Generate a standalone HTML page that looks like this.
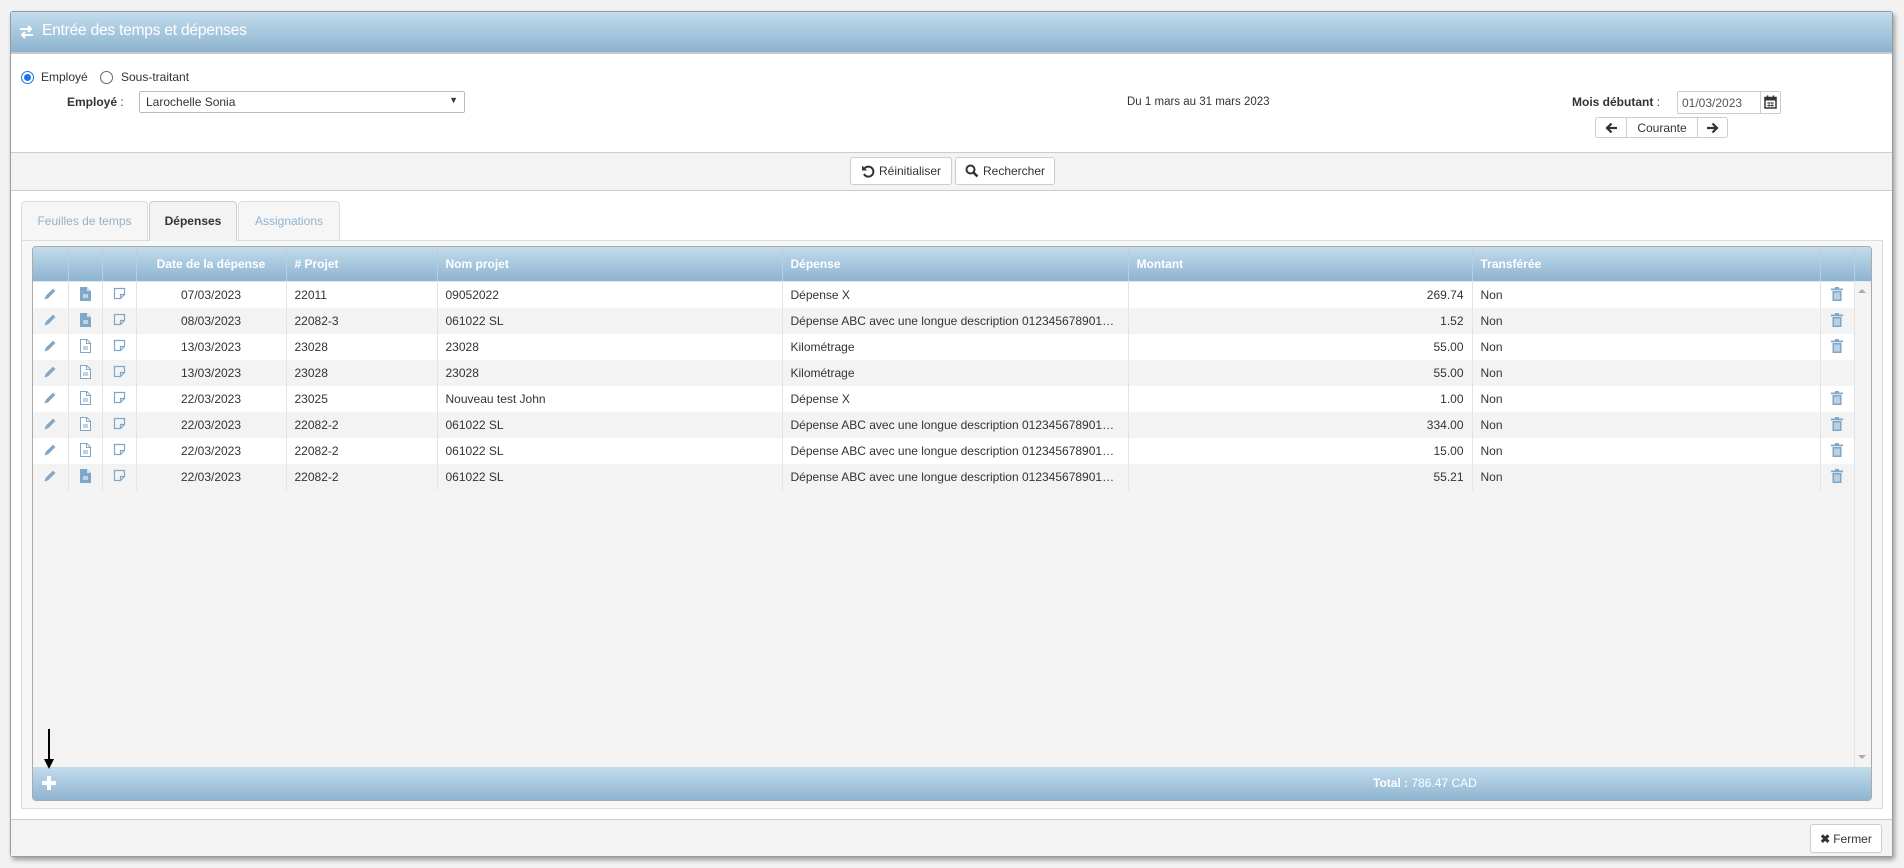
<!DOCTYPE html>
<html><head><meta charset="utf-8">
<style>
*{box-sizing:border-box;margin:0;padding:0}
body{width:1904px;height:868px;background:#f2f2f2;font-family:"Liberation Sans",sans-serif;color:#333;position:relative;overflow:hidden;font-size:12px}
.abs{position:absolute}
.win{left:10px;top:11px;width:1883px;height:846px;border:1px solid #9a9a9a;border-radius:3px;background:#fff;box-shadow:2px 3px 5px rgba(0,0,0,.35);overflow:hidden}
.grad{background:linear-gradient(#c2dcec,#8db3d0)}
.btn{border:1px solid #ccc;border-radius:3px;background:#fff;display:flex;align-items:center;justify-content:center;font-size:12px;color:#333}
table{border-collapse:collapse;table-layout:fixed}
td,th{height:26px;white-space:nowrap;overflow:hidden;text-overflow:ellipsis;padding:0 8px;font-size:12px}
th{height:34px;color:#fff;font-weight:bold;text-align:left;border-left:1px solid #b7cfe0}
td{border-left:1px solid #e2e2e2}
tr.r1 td{background:#fff}
tr.r2 td{background:#f3f3f3}
td.ic{text-align:center;padding:0}
td.c{text-align:center}
td.rt{text-align:right}
</style></head><body>
<div class="abs win"></div>
<div class="abs grad" style="left:11px;top:12px;width:1881px;height:40px;border-radius:2px 2px 0 0"></div>
<div class="abs" style="left:11px;top:52px;width:1881px;height:2px;background:#c8c8c8"></div>
<svg class="abs" style="left:19px;top:25px" width="15" height="14" viewBox="0 0 15 14"><path d="M1 4h11M9 1l3 3-3 3M14 10H3M6 7l-3 3 3 3" stroke="#fff" stroke-width="2" fill="none"/></svg>
<div class="abs" style="left:42px;top:22px;color:#fff;font-size:15.5px;letter-spacing:-0.2px">Entrée des temps et dépenses</div>

<div class="abs" style="left:21px;top:71px;width:13px;height:13px;border-radius:50%;border:1px solid #1a73e8;background:#fff"><div style="margin:2px;width:7px;height:7px;border-radius:50%;background:#1a73e8"></div></div>
<div class="abs" style="left:41px;top:70px;font-size:12px">Employé</div>
<div class="abs" style="left:100px;top:71px;width:13px;height:13px;border-radius:50%;border:1px solid #666;background:#fff"></div>
<div class="abs" style="left:121px;top:70px;font-size:12px">Sous-traitant</div>
<div class="abs" style="left:67px;top:95px;font-weight:bold;font-size:12px">Employé <span style="font-weight:normal">:</span></div>
<div class="abs" style="left:139px;top:91px;width:326px;height:22px;border:1px solid #bbb;border-radius:2px;padding:3px 6px;font-size:12px">Larochelle Sonia<span style="position:absolute;right:6px;top:3px;font-size:9px">▼</span></div>
<div class="abs" style="left:1127px;top:96px;font-size:11.5px">Du 1 mars au 31 mars 2023</div>
<div class="abs" style="left:1572px;top:95px;font-weight:bold;font-size:12px">Mois débutant <span style="font-weight:normal">:</span></div>
<div class="abs" style="left:1677px;top:91px;width:104px;height:23px;border:1px solid #ccc;border-radius:2px;padding:4px 4px;font-size:12px;color:#555">01/03/2023</div>
<div class="abs" style="left:1760px;top:92px;width:1px;height:21px;background:#ccc"></div>
<svg class="abs" style="left:1764px;top:95px" width="13" height="14" viewBox="0 0 13 14"><rect x="1" y="2.5" width="11" height="10.5" fill="none" stroke="#333" stroke-width="1.5"/><rect x="1" y="2.5" width="11" height="3" fill="#333"/><path d="M3.5 0.5v3M9.5 0.5v3" stroke="#333" stroke-width="1.5"/><path d="M3 8h7M3 10.5h7M5 7v5M8 7v5" stroke="#333" stroke-width=".8"/></svg>
<div class="abs btn" style="left:1595px;top:117px;width:32px;height:21px;border-radius:3px 0 0 3px"><svg width="13" height="12" viewBox="0 0 13 12"><path d="M12 6H2M6.5 1.5L2 6l4.5 4.5" stroke="#333" stroke-width="2.2" fill="none"/></svg></div>
<div class="abs btn" style="left:1626px;top:117px;width:72px;height:21px;border-radius:0">Courante</div>
<div class="abs btn" style="left:1697px;top:117px;width:31px;height:21px;border-radius:0 3px 3px 0"><svg width="13" height="12" viewBox="0 0 13 12"><path d="M1 6h10M6.5 1.5L11 6l-4.5 4.5" stroke="#333" stroke-width="2.2" fill="none"/></svg></div>

<div class="abs" style="left:11px;top:152px;width:1881px;height:39px;background:#f3f3f3;border-top:1px solid #ccc;border-bottom:1px solid #ccc"></div>
<div class="abs btn" style="left:850px;top:157px;width:102px;height:28px"><svg width="14" height="14" viewBox="0 0 14 14" style="margin-right:4px"><path d="M3.5 4.5A5 5 0 1 1 3 10" stroke="#333" stroke-width="2" fill="none"/><path d="M1 1.5v5h5z" fill="#333"/></svg>Réinitialiser</div>
<div class="abs btn" style="left:955px;top:157px;width:100px;height:28px"><svg width="14" height="14" viewBox="0 0 14 14" style="margin-right:4px"><circle cx="5.5" cy="5.5" r="4" stroke="#333" stroke-width="2" fill="none"/><path d="M8.5 8.5l4 4" stroke="#333" stroke-width="2.5"/></svg>Rechercher</div>

<div class="abs" style="left:21px;top:201px;width:127px;height:40px;border:1px solid #ddd;border-bottom:none;border-radius:4px 4px 0 0;background:#f6f6f6;color:#8fb3d0;padding-top:12px;text-align:center;font-size:12px">Feuilles de temps</div>
<div class="abs" style="left:149px;top:201px;width:88px;height:40px;border:1px solid #ccc;border-bottom:none;border-radius:4px 4px 0 0;background:#f3f3f3;color:#333;padding-top:12px;text-align:center;font-size:12px;font-weight:bold;z-index:2">Dépenses</div>
<div class="abs" style="left:238px;top:201px;width:102px;height:40px;border:1px solid #ddd;border-bottom:none;border-radius:4px 4px 0 0;background:#f6f6f6;color:#8fb3d0;padding-top:12px;text-align:center;font-size:12px">Assignations</div>
<div class="abs" style="left:21px;top:240px;width:1862px;height:569px;border:1px solid #ddd;background:#f7f7f7"></div>

<div class="abs" style="left:32px;top:246px;width:1840px;height:555px;border:1px solid #aaa;border-radius:4px;background:#f3f3f3;overflow:hidden">
<table style="width:1821px">
<colgroup><col style="width:35px"><col style="width:34px"><col style="width:34px"><col style="width:150px"><col style="width:151px"><col style="width:345px"><col style="width:346px"><col style="width:344px"><col style="width:348px"><col style="width:34px"></colgroup>
<tr style="background:linear-gradient(#c2dcec,#8db3d0)"><th style="border-left:none"></th><th></th><th></th><th style="text-align:center">Date de la dépense</th><th># Projet</th><th>Nom projet</th><th>Dépense</th><th>Montant</th><th>Transférée</th><th></th></tr>
</table>
<div class="abs grad" style="left:1821px;top:0;width:19px;height:34px;border-left:1px solid #b7cfe0"></div>
<div class="abs" style="left:0;top:34px;width:1840px;height:1px;background:#dde8f0"></div>
<table id="body" style="width:1821px;position:absolute;left:0;top:35px">
<colgroup><col style="width:35px"><col style="width:34px"><col style="width:34px"><col style="width:150px"><col style="width:151px"><col style="width:345px"><col style="width:346px"><col style="width:344px"><col style="width:348px"><col style="width:34px"></colgroup>
</table>
<div class="abs" style="left:1821px;top:35px;width:19px;height:485px;background:#f3f3f3;border-left:1px solid #e4e4e4"></div>
<div class="abs" style="left:1825px;top:42px;width:0;height:0;border-left:4px solid transparent;border-right:4px solid transparent;border-bottom:4px solid #aaa"></div>
<div class="abs" style="left:1825px;top:508px;width:0;height:0;border-left:4px solid transparent;border-right:4px solid transparent;border-top:4px solid #aaa"></div>
<div class="abs grad" style="left:0;top:520px;width:1840px;height:34px"></div>
<div class="abs" style="left:9px;top:529px;width:14px;height:14px"><div style="position:absolute;left:5px;top:0;width:4px;height:14px;background:#fff"></div><div style="position:absolute;left:0;top:5px;width:14px;height:4px;background:#fff"></div></div>
<div class="abs" style="left:1340px;top:529px;color:#fff;font-size:12px"><b>Total :</b> 786.47 CAD</div>
</div>
<div class="abs" style="left:48px;top:729px;width:2px;height:32px;background:#000"></div>
<div class="abs" style="left:44px;top:759px;width:0;height:0;border-left:5px solid transparent;border-right:5px solid transparent;border-top:10px solid #000"></div>

<div class="abs" style="left:11px;top:819px;width:1881px;height:37px;background:#f3f3f3;border-top:1px solid #ccc"></div>
<div class="abs btn" style="left:1810px;top:824px;width:72px;height:29px"><span style="font-weight:bold;margin-right:3px">✖</span>Fermer</div>

<script>
var rows=[["07/03/2023","22011","09052022","Dépense X","269.74",1,1],
["08/03/2023","22082-3","061022 SL","Dépense ABC avec une longue description 0123456789012345678","1.52",1,1],
["13/03/2023","23028","23028","Kilométrage","55.00",0,1],
["13/03/2023","23028","23028","Kilométrage","55.00",0,0],
["22/03/2023","23025","Nouveau test John","Dépense X","1.00",0,1],
["22/03/2023","22082-2","061022 SL","Dépense ABC avec une longue description 0123456789012345678","334.00",0,1],
["22/03/2023","22082-2","061022 SL","Dépense ABC avec une longue description 0123456789012345678","15.00",0,1],
["22/03/2023","22082-2","061022 SL","Dépense ABC avec une longue description 0123456789012345678","55.21",1,1]];
var c="#7fa7c9";
var pencil='<svg width="14" height="14" viewBox="0 0 14 14"><path d="M2 12l.8-3.2L10 1.6l2.4 2.4-7.2 7.2z" fill="'+c+'"/><path d="M1.5 12.5l1-3 2 2z" fill="'+c+'"/></svg>';
function doc(f){return f?'<svg width="11" height="14" viewBox="0 0 11 14"><path d="M0 0h7l4 4v10H0z" fill="'+c+'"/><path d="M7 0v4h4" fill="#cfe0ee"/><path d="M3 8h5M3 10h5" stroke="#fff"/></svg>':'<svg width="11" height="14" viewBox="0 0 11 14"><path d="M.5.5h6.3l3.7 3.7v9.3H.5z" fill="#fff" stroke="'+c+'"/><path d="M6.5.5v4h4" fill="none" stroke="'+c+'"/><path d="M3 8h5M3 10h5" stroke="'+c+'"/></svg>';}
var note='<svg width="13" height="13" viewBox="0 0 13 13"><path d="M1.5 1.5h10v6l-4 4h-6z" fill="none" stroke="'+c+'" stroke-width="1.2"/><path d="M11.5 7.5h-4v4" fill="none" stroke="'+c+'" stroke-width="1.2"/></svg>';
var trash='<svg width="12" height="14" viewBox="0 0 12 14"><rect x="0" y="1.5" width="12" height="1.8" fill="'+c+'"/><rect x="4" y="0" width="4" height="2" fill="'+c+'"/><path d="M1.5 4h9v10h-9z" fill="'+c+'"/><path d="M4 5.5v7M6 5.5v7M8 5.5v7" stroke="#fff" stroke-width=".9"/></svg>';
var h="";rows.forEach(function(r,i){h+='<tr class="'+(i%2?'r2':'r1')+'"><td class="ic" style="border-left:none">'+pencil+'</td><td class="ic">'+doc(r[5])+'</td><td class="ic">'+note+'</td><td class="c">'+r[0]+'</td><td>'+r[1]+'</td><td>'+r[2]+'</td><td>'+r[3]+'</td><td class="rt">'+r[4]+'</td><td>Non</td><td class="ic">'+(r[6]?trash:'')+'</td></tr>';});
document.getElementById("body").insertAdjacentHTML("beforeend",h);
</script>
</body></html>
